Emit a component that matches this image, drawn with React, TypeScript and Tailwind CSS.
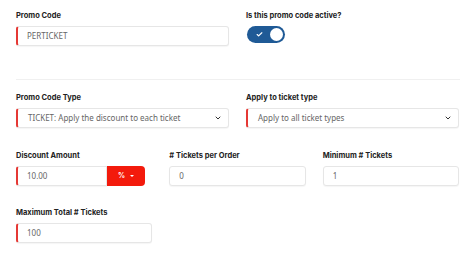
import { ChevronDown, Check } from "lucide-react";

const label = "block h-[10px] text-[7.5px] leading-[10px] font-bold text-[#222] font-['Inter',sans-serif]";
const box =
  "flex h-[20px] items-center rounded-[3px] border border-[#e6e6e6] bg-white text-[8px] text-[#666] font-['Noto_Sans',sans-serif] shadow-[0_1px_1px_rgba(0,0,0,0.04)]";
const req = "border-l-2 border-l-[#e53935]";

function Field({ title, value, required, className }: { title: string; value: string; required?: boolean; className?: string }) {
  return (
    <div className={className}>
      <span className={label}>{title}</span>
      <div className={`${box} ${required ? req : ""} mt-[5px] pl-[9px]`}>{value}</div>
    </div>
  );
}

function SelectField({ title, value }: { title: string; value: string }) {
  return (
    <div>
      <span className={label}>{title}</span>
      <div className={`${box} ${req} mt-[5px] justify-between pl-[10px] pr-[6px]`}>
        <span>{value}</span>
        <ChevronDown size={8} strokeWidth={3} className="text-[#333]" />
      </div>
    </div>
  );
}

export default function App() {
  return (
    <div className="h-[256px] w-[474px] bg-white px-[16px] pt-[11px]">
      <div className="grid w-[443px] grid-cols-2 gap-x-[17px]">
        <Field title="Promo Code" value="PERTICKET" required />
        <div>
          <span className={label}>Is this promo code active?</span>
          <div className="mt-[5px] ml-[1px] flex h-[17px] w-[38px] items-center justify-between rounded-full bg-[#1f5a96] pl-[9px] pr-[2px]">
            <Check size={7} strokeWidth={4} className="text-white" />
            <div className="h-[13px] w-[13px] rounded-full bg-white" />
          </div>
        </div>
      </div>

      <div className="mt-[33px] h-px w-[444px] bg-[#f0f0f0]" />

      <div className="mt-[13px] grid w-[443px] grid-cols-2 gap-x-[17px]">
        <SelectField title="Promo Code Type" value="TICKET: Apply the discount to each ticket" />
        <SelectField title="Apply to ticket type" value="Apply to all ticket types" />
      </div>

      <div className="mt-[23px] grid w-[443px] grid-cols-3 gap-x-[17px]">
        <div>
          <span className={label}>Discount Amount</span>
          <div className="mt-[5px] flex w-[129px]">
            <div className={`${box} ${req} flex-1 rounded-r-none pl-[9px]`}>10.00</div>
            <div className="flex h-[20px] w-[38px] items-center justify-center gap-[5px] rounded-r-[4px] bg-[#f31a0c] text-[7px] font-bold text-white font-['Inter',sans-serif]">
              %
              <span className="h-0 w-0 border-x-[2px] border-t-[2px] border-x-transparent border-t-white" />
            </div>
          </div>
        </div>
        <Field title="# Tickets per Order" value="0" />
        <Field title="Minimum # Tickets" value="1" />
      </div>

      <div className="mt-[22px] grid w-[443px] grid-cols-3 gap-x-[17px]">
        <Field title="Maximum Total # Tickets" value="100" required />
      </div>
    </div>
  );
}
